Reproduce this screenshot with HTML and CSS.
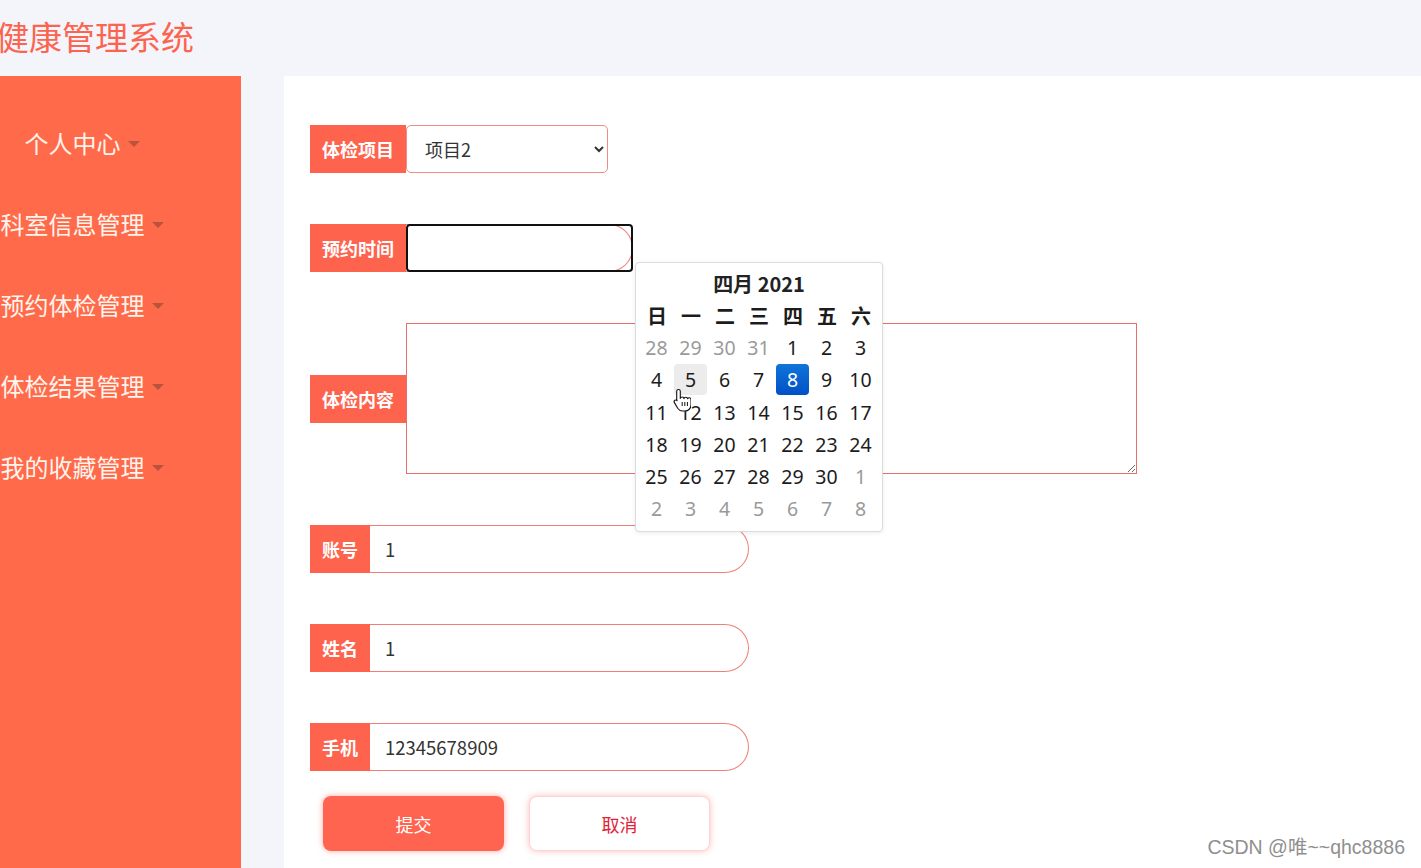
FILE: index.html
```html
<!DOCTYPE html>
<html>
<head>
    <meta charset="UTF-8">
    <title>健康管理系统</title>
    <link rel="stylesheet" href="styles.css">
</head>
<body>
    <!-- Top bar -->
    <div class="header">
        <h1 class="title">健康管理系统</h1>
    </div>

    <div class="layout">
        <!-- Side menu -->
        <div class="sidebar">
            <ul class="menu">
                <li class="menu-item">个人中心<span class="caret"></span></li>
                <li class="menu-item">科室信息管理<span class="caret"></span></li>
                <li class="menu-item">预约体检管理<span class="caret"></span></li>
                <li class="menu-item">体检结果管理<span class="caret"></span></li>
                <li class="menu-item">我的收藏管理<span class="caret"></span></li>
            </ul>
        </div>

        <!-- Form panel -->
        <div class="main">
            <form class="form" onsubmit="return false">
                <div class="form-row">
                    <label class="form-label">体检项目</label>
                    <select class="form-select">
                        <option>项目1</option>
                        <option selected>项目2</option>
                        <option>项目3</option>
                    </select>
                </div>

                <div class="form-row">
                    <label class="form-label">预约时间</label>
                    <div class="date-box">
                        <input type="text" class="form-input date-input">
                        <div class="calendar">
                            <div class="cal-title">四月 2021</div>
                            <div class="cal-grid">
                                <span class="cal-head">日</span>
                                <span class="cal-head">一</span>
                                <span class="cal-head">二</span>
                                <span class="cal-head">三</span>
                                <span class="cal-head">四</span>
                                <span class="cal-head">五</span>
                                <span class="cal-head">六</span>

                                <span class="cal-day muted">28</span>
                                <span class="cal-day muted">29</span>
                                <span class="cal-day muted">30</span>
                                <span class="cal-day muted">31</span>
                                <span class="cal-day">1</span>
                                <span class="cal-day">2</span>
                                <span class="cal-day">3</span>

                                <span class="cal-day">4</span>
                                <span class="cal-day hover">5</span>
                                <span class="cal-day">6</span>
                                <span class="cal-day">7</span>
                                <span class="cal-day selected">8</span>
                                <span class="cal-day">9</span>
                                <span class="cal-day">10</span>

                                <span class="cal-day">11</span>
                                <span class="cal-day">12</span>
                                <span class="cal-day">13</span>
                                <span class="cal-day">14</span>
                                <span class="cal-day">15</span>
                                <span class="cal-day">16</span>
                                <span class="cal-day">17</span>

                                <span class="cal-day">18</span>
                                <span class="cal-day">19</span>
                                <span class="cal-day">20</span>
                                <span class="cal-day">21</span>
                                <span class="cal-day">22</span>
                                <span class="cal-day">23</span>
                                <span class="cal-day">24</span>

                                <span class="cal-day">25</span>
                                <span class="cal-day">26</span>
                                <span class="cal-day">27</span>
                                <span class="cal-day">28</span>
                                <span class="cal-day">29</span>
                                <span class="cal-day">30</span>
                                <span class="cal-day muted">1</span>

                                <span class="cal-day muted">2</span>
                                <span class="cal-day muted">3</span>
                                <span class="cal-day muted">4</span>
                                <span class="cal-day muted">5</span>
                                <span class="cal-day muted">6</span>
                                <span class="cal-day muted">7</span>
                                <span class="cal-day muted">8</span>
                            </div>
                            <!-- mouse pointer over the 5th -->
                            <svg class="cursor" width="18" height="24" viewBox="0 0 18 24">
                                <path d="M5.5 1.5c1 0 1.8.8 1.8 1.8v7.2c.2-.9 1-1.5 1.9-1.5s1.7.7 1.8 1.6c.2-.8 1-1.4 1.8-1.4.9 0 1.7.7 1.8 1.6.3-.6.9-1 1.6-1 1 0 1.8.8 1.8 1.8v5.2c0 3.6-2.6 6.2-6 6.2H9.5c-2.2 0-3.6-1-4.8-2.8L1.4 14.6c-.5-.8-.3-1.800.5-2.3.8-.5 1.7-.3 2.2.4l-.4-.6V3.3c0-1 .8-1.8 1.8-1.8z" fill="#fff" stroke="#111" stroke-width="1.1" stroke-linejoin="round"/>
                                <path d="M9.2 14v4M11.8 14v4M14.4 14v4" stroke="#111" stroke-width="1"/>
                            </svg>
                        </div>
                    </div>
                </div>

                <div class="form-row">
                    <label class="form-label">体检内容</label>
                    <textarea class="form-textarea"></textarea>
                </div>

                <div class="form-row">
                    <label class="form-label">账号</label>
                    <input type="text" class="form-input round-input" value="1">
                </div>

                <div class="form-row">
                    <label class="form-label">姓名</label>
                    <input type="text" class="form-input round-input" value="1">
                </div>

                <div class="form-row">
                    <label class="form-label">手机</label>
                    <input type="text" class="form-input round-input" value="12345678909">
                </div>
            </form>

            <div class="button-container">
                <button type="button" class="btn btn-submit">提交</button>
                <button type="button" class="btn btn-cancel">取消</button>
            </div>
        </div>
    </div>

    <div class="watermark">CSDN @唯~~qhc8886</div>
</body>
</html>
```

FILE: styles.css
```css
/* --- Health management system: appointment form --- */
body {
    margin: 0;
    padding: 0;
    height: 868px;
    overflow: hidden;
    background-color: #f4f4fb;
    font-family: "Noto Sans CJK SC", "Noto Sans", sans-serif;
}

.header {
    height: 76px;
    display: flex;
    align-items: center;
}

.title {
    margin: -4px 0 0 -4px;
    font-size: 33px;
    font-weight: normal;
    color: #fb6550;
}

.layout {
    display: flex;
    gap: 43px;
    height: 792px;
}

/* Side menu */
.sidebar {
    width: 241px;
    background-color: #ff6a4b;
}

.menu {
    list-style: none;
    margin: 0;
    padding: 26px 0 0 0;
    width: 164px;
}

.menu-item {
    height: 81px;
    display: flex;
    align-items: center;
    justify-content: center;
    font-size: 24px;
    color: #fff4ec;
    white-space: nowrap;
}

.caret {
    width: 0;
    height: 0;
    margin-left: 7px;
    margin-top: 2px;
    border-left: 6px solid transparent;
    border-right: 6px solid transparent;
    border-top: 6px solid #b9533c;
}

/* Form panel */
.main {
    flex: 1;
    background-color: #ffffff;
    padding: 49px 0 0 26px;
}

.form {
    display: flex;
    flex-direction: column;
    gap: 51px;
}

.form-row {
    display: flex;
    align-items: center;
}

.form-label {
    height: 48px;
    padding: 0 12px;
    display: flex;
    align-items: center;
    background-color: #fe634e;
    color: #ffffff;
    font-size: 18px;
    font-weight: bold;
    white-space: nowrap;
}

.form-select {
    width: 202px;
    height: 48px;
    padding: 0 10px 0 14px;
    border: 1px solid #ef8c84;
    border-radius: 5px;
    background-color: #fff;
    font-family: inherit;
    font-size: 18px;
    color: #333;
    outline: none;
}

.form-input {
    box-sizing: border-box;
    height: 48px;
    padding: 0 15px;
    border: 1px solid #ef8078;
    font-family: inherit;
    font-size: 18.5px;
    color: #333;
    outline: none;
}

.round-input {
    width: 379px;
    border-left: none;
    border-radius: 0 24px 24px 0;
}

/* Date field shown focused with its picker open */
.date-box {
    position: relative;
    width: 227px;
    height: 48px;
}

.date-input {
    width: 100%;
    border-left: none;
    border-radius: 0 24px 24px 0;
}

.date-box::after {
    content: "";
    position: absolute;
    top: 0;
    left: 0;
    right: 0;
    bottom: 0;
    border: 2px solid #111;
    border-radius: 4px;
    pointer-events: none;
}

.calendar {
    position: absolute;
    top: 38px;
    left: 229px;
    width: 248px;
    height: 270px;
    box-sizing: border-box;
    padding-top: 7px;
    background-color: #fff;
    border: 1px solid #dcdcdc;
    border-radius: 4px;
    box-shadow: 0 1px 4px rgba(0, 0, 0, 0.08);
    z-index: 5;
}

.cal-title {
    height: 28px;
    margin-bottom: 1px;
    text-align: center;
    font-size: 20px;
    font-weight: bold;
    line-height: 28px;
    color: #222;
}

.cal-grid {
    display: grid;
    grid-template-columns: repeat(7, 34px);
    grid-auto-rows: 32.2px;
    padding-left: 4px;
}

.cal-head,
.cal-day {
    display: flex;
    align-items: center;
    justify-content: center;
    font-size: 20px;
    color: #1c1c1c;
}

.cal-head {
    font-weight: bold;
}

.cal-day {
    font-family: "Noto Sans", "Noto Sans CJK SC", sans-serif;
    font-size: 19.5px;
    width: 33px;
    height: 31px;
    margin: 1px 0 0 0;
    border-radius: 4px;
}

.cal-day.muted {
    color: #9a9a9a;
}

.cal-day.hover {
    background-color: #ececec;
}

.cal-day.selected {
    background: linear-gradient(#1075d8, #0050c6);
    color: #fff;
}

.cursor {
    position: absolute;
    left: 37px;
    top: 125px;
}

.form-textarea {
    width: 731px;
    height: 151px;
    box-sizing: border-box;
    border: 1px solid #e8706a;
    outline: none;
    font-family: inherit;
    font-size: 16px;
}

/* Buttons under the form */
.button-container {
    display: flex;
    gap: 25px;
    margin: 25px 0 0 13px;
}

.btn {
    width: 181px;
    height: 55px;
    border-radius: 8px;
    font-family: inherit;
    font-size: 18px;
    cursor: pointer;
}

.btn-submit {
    background-color: #ff6450;
    border: none;
    color: #fff;
    box-shadow: 0 0 6px rgba(255, 100, 90, 0.55);
}

.btn-cancel {
    background-color: #fff;
    border: 1px solid #ffd3d3;
    color: #e0233a;
    box-shadow: 0 0 6px rgba(255, 120, 120, 0.5);
}

.watermark {
    position: absolute;
    right: 16px;
    bottom: 8px;
    font-family: "Liberation Sans", "Noto Sans CJK SC", sans-serif;
    font-size: 19.5px;
    color: #8f8f8f;
    text-shadow: 0 0 2px #fff;
}
```
